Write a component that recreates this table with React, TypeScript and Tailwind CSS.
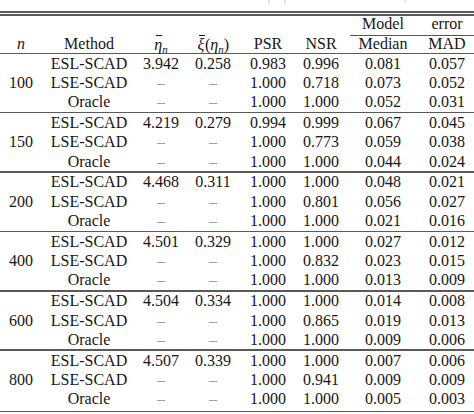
import React from 'react';

const COLS = ['w-[42px]', 'w-[94px]', 'w-[50px]', 'w-[54px]', 'w-[56px]', 'w-[50px]', 'w-[74px]', 'w-[54px]'];

interface MethodRow {
  method: string;
  eta?: string;
  xi?: string;
  psr: string;
  nsr: string;
  median: string;
  mad: string;
}

interface Group {
  n: string;
  rows: MethodRow[];
}

const GROUPS: Group[] = [
  {
    n: '100',
    rows: [
      { method: 'ESL-SCAD', eta: '3.942', xi: '0.258', psr: '0.983', nsr: '0.996', median: '0.081', mad: '0.057' },
      { method: 'LSE-SCAD', psr: '1.000', nsr: '0.718', median: '0.073', mad: '0.052' },
      { method: 'Oracle', psr: '1.000', nsr: '1.000', median: '0.052', mad: '0.031' },
    ],
  },
  {
    n: '150',
    rows: [
      { method: 'ESL-SCAD', eta: '4.219', xi: '0.279', psr: '0.994', nsr: '0.999', median: '0.067', mad: '0.045' },
      { method: 'LSE-SCAD', psr: '1.000', nsr: '0.773', median: '0.059', mad: '0.038' },
      { method: 'Oracle', psr: '1.000', nsr: '1.000', median: '0.044', mad: '0.024' },
    ],
  },
  {
    n: '200',
    rows: [
      { method: 'ESL-SCAD', eta: '4.468', xi: '0.311', psr: '1.000', nsr: '1.000', median: '0.048', mad: '0.021' },
      { method: 'LSE-SCAD', psr: '1.000', nsr: '0.801', median: '0.056', mad: '0.027' },
      { method: 'Oracle', psr: '1.000', nsr: '1.000', median: '0.021', mad: '0.016' },
    ],
  },
  {
    n: '400',
    rows: [
      { method: 'ESL-SCAD', eta: '4.501', xi: '0.329', psr: '1.000', nsr: '1.000', median: '0.027', mad: '0.012' },
      { method: 'LSE-SCAD', psr: '1.000', nsr: '0.832', median: '0.023', mad: '0.015' },
      { method: 'Oracle', psr: '1.000', nsr: '1.000', median: '0.013', mad: '0.009' },
    ],
  },
  {
    n: '600',
    rows: [
      { method: 'ESL-SCAD', eta: '4.504', xi: '0.334', psr: '1.000', nsr: '1.000', median: '0.014', mad: '0.008' },
      { method: 'LSE-SCAD', psr: '1.000', nsr: '0.865', median: '0.019', mad: '0.013' },
      { method: 'Oracle', psr: '1.000', nsr: '1.000', median: '0.009', mad: '0.006' },
    ],
  },
  {
    n: '800',
    rows: [
      { method: 'ESL-SCAD', eta: '4.507', xi: '0.339', psr: '1.000', nsr: '1.000', median: '0.007', mad: '0.006' },
      { method: 'LSE-SCAD', psr: '1.000', nsr: '0.941', median: '0.009', mad: '0.009' },
      { method: 'Oracle', psr: '1.000', nsr: '1.000', median: '0.005', mad: '0.003' },
    ],
  },
];

const Dash = () => <span className="text-[#a0a0a0]">–</span>;

const Rule = () => <div className="h-[1.5px] bg-[#5a5a5a]" />;

// letter with a bar over it (\bar{x})
const Bar: React.FC<{ ch: string }> = ({ ch }) => (
  <span className="inline-flex flex-col items-center align-bottom">
    <span className="h-px w-[6px] bg-[#161616] ml-[2px]" />
    <span className="italic mt-[1px]">{ch}</span>
  </span>
);

const DataRow: React.FC<{ n?: string; row: MethodRow }> = ({ n, row }) => {
  const cells: React.ReactNode[] = [
    n ?? '',
    row.method,
    row.eta ?? <Dash />,
    row.xi ?? <Dash />,
    row.psr,
    row.nsr,
    row.median,
    row.mad,
  ];
  return (
    <div className="flex h-[19.3px] items-center">
      {cells.map((c, i) => (
        <div key={i} className={`${COLS[i]} text-center`}>
          {c}
        </div>
      ))}
    </div>
  );
};

export default function App() {
  return (
    <div className="w-[474px] h-[414px] overflow-hidden bg-white text-[#161616] text-[16px] leading-none font-['Liberation_Serif','Times_New_Roman','DejaVu_Serif',serif]">
      {/* bottoms of a cropped caption line */}
      <div className="flex h-[11px] items-start">
        <span className="ml-[268px] h-[4px] w-[2px] bg-[#e2e2e2]" />
        <span className="ml-[14px] h-[4px] w-[2px] bg-[#e2e2e2]" />
        <span className="ml-[118px] h-[3px] w-[2px] bg-[#e6e6e6]" />
      </div>
      <Rule />
      <div className="h-[1.5px]" />
      <Rule />

      {/* header */}
      <div className="flex h-[19px] items-end pb-[3px]">
        <div className="w-[346px]" />
        <div className="w-[74px] text-center">Model</div>
        <div className="w-[54px] text-center">error</div>
      </div>
      <div className="flex">
        <div className="w-[350px]" />
        <div className="flex-1 h-px bg-[#555]" />
      </div>
      <div className="flex h-[17px] items-center">
        <div className={`${COLS[0]} text-center italic`}>n</div>
        <div className={`${COLS[1]} text-center`}>Method</div>
        <div className={`${COLS[2]} text-center`}>
          <Bar ch="η" />
          <sub className="italic text-[11px]">n</sub>
        </div>
        <div className={`${COLS[3]} text-center`}>
          <Bar ch="ξ" />(<span className="italic">η</span>
          <sub className="italic text-[11px]">n</sub>)
        </div>
        <div className={`${COLS[4]} text-center`}>PSR</div>
        <div className={`${COLS[5]} text-center`}>NSR</div>
        <div className={`${COLS[6]} text-center`}>Median</div>
        <div className={`${COLS[7]} text-center`}>MAD</div>
      </div>
      <Rule />

      {GROUPS.map((g) => (
        <div key={g.n}>
          {g.rows.map((r, i) => (
            <DataRow key={r.method} n={i === 1 ? g.n : undefined} row={r} />
          ))}
          {g.n !== '800' && <Rule />}
        </div>
      ))}

      <div className="h-[2px]" />
      <Rule />
      <div className="h-[1.5px]" />
      <Rule />
    </div>
  );
}
